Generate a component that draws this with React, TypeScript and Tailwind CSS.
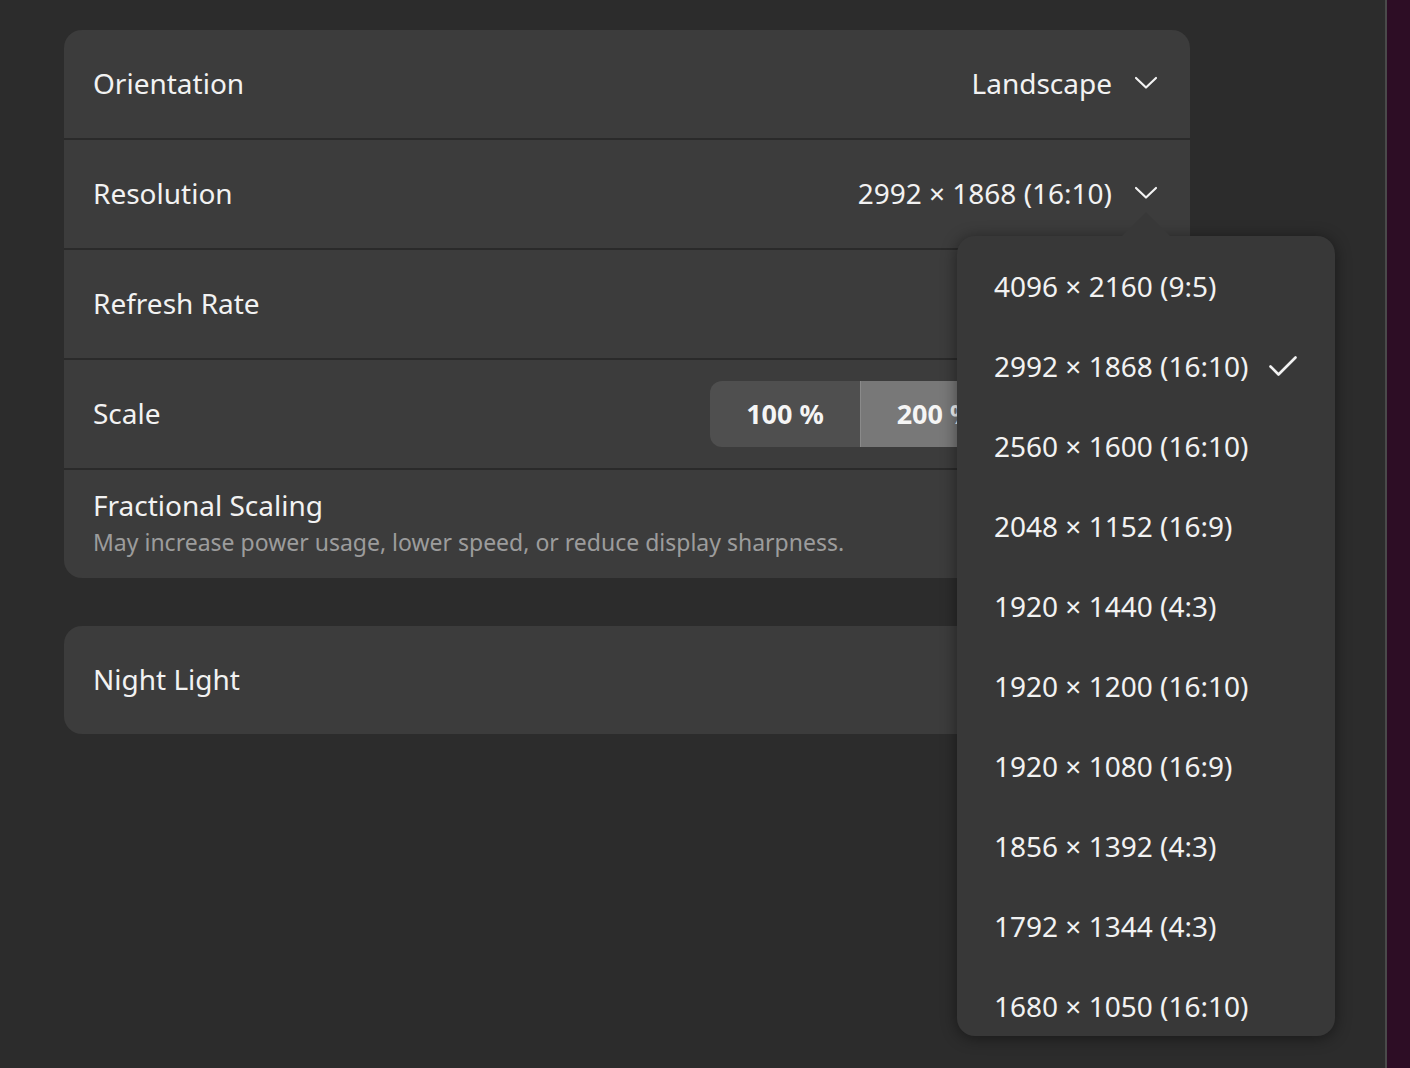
const font = { fontFamily: '"Noto Sans", "Open Sans", sans-serif' };

const resolutions = [
  '4096 × 2160 (9:5)',
  '2992 × 1868 (16:10)',
  '2560 × 1600 (16:10)',
  '2048 × 1152 (16:9)',
  '1920 × 1440 (4:3)',
  '1920 × 1200 (16:10)',
  '1920 × 1080 (16:9)',
  '1856 × 1392 (4:3)',
  '1792 × 1344 (4:3)',
  '1680 × 1050 (16:10)',
];

function Chevron() {
  return (
    <svg width="24" height="14" viewBox="0 0 24 14" fill="none" className="text-[#f2f2f2]">
      <polyline points="2,2 12,11.5 22,2" stroke="currentColor" strokeWidth="2.2" strokeLinecap="round" strokeLinejoin="round" />
    </svg>
  );
}

function Tick() {
  return (
    <svg width="30" height="24" viewBox="0 0 30 24" fill="none" className="text-[#f2f2f2]">
      <polyline points="2.5,12.5 10.5,20.5 27.5,3.5" stroke="currentColor" strokeWidth="2.6" strokeLinecap="round" strokeLinejoin="round" />
    </svg>
  );
}

function Row({ label, children }: { label: string; children?: React.ReactNode }) {
  return (
    <div className="flex items-center justify-between h-[110px] pl-[29px] pr-[32px] pb-[2px] border-b-2 border-[#2a2a2a]">
      <span className="text-[28px] text-[#f2f2f2]">{label}</span>
      {children}
    </div>
  );
}

function Dropdown({ value }: { value: string }) {
  return (
    <div className="flex items-center gap-[22px] text-[28px] text-[#f2f2f2]">
      <span>{value}</span>
      <Chevron />
    </div>
  );
}

export default function App() {
  return (
    <div className="relative flex w-full h-[1068px] bg-[#2c2c2c] overflow-hidden" style={font}>
      <div className="flex-1 pl-[64px] pt-[30px] flex flex-col gap-[48px]">
        <div className="w-[1126px] rounded-[18px] bg-[#3c3c3c] flex flex-col overflow-hidden">
          <Row label="Orientation">
            <Dropdown value="Landscape" />
          </Row>
          <Row label="Resolution">
            <Dropdown value="2992 × 1868 (16:10)" />
          </Row>
          <Row label="Refresh Rate" />
          <Row label="Scale">
            <div className="flex h-[66px] mt-[2px] rounded-[12px] overflow-hidden">
              <div className="w-[150px] flex items-center justify-center bg-[#4f4f4f] text-[27px] font-bold text-[#f5f5f5]">100 %</div>
              <div className="w-px bg-[#8a8a8a]" />
              <div className="w-[149px] flex items-center justify-center bg-[#787878] text-[27px] font-bold text-[#f5f5f5]">200 %</div>
              <div className="w-px bg-[#5c5c5c]" />
              <div className="w-[147px] bg-[#4f4f4f]" />
            </div>
          </Row>
          <div className="flex flex-col justify-center h-[108px] pl-[29px]">
            <span className="text-[28px] leading-[37px] text-[#f2f2f2]">Fractional Scaling</span>
            <span className="text-[23px] leading-[37px] text-[#9c9c9c]">May increase power usage, lower speed, or reduce display sharpness.</span>
          </div>
        </div>
        <div className="w-[1126px] rounded-[18px] bg-[#3c3c3c] flex items-center h-[108px] pl-[29px] pb-[2px]">
          <span className="text-[28px] text-[#f2f2f2]">Night Light</span>
        </div>
      </div>
      <div className="w-[25px] h-full border-l-2 border-[#4a4a4a] bg-[#2d0d25]" />

      {/* Resolution popover */}
      <div className="absolute left-[957px] top-[212px] w-[378px]">
        <div className="absolute left-[165px] top-0 w-0 h-0 border-l-[24px] border-r-[24px] border-b-[24px] border-l-transparent border-r-transparent border-b-[#383838]" />
        <div className="mt-[24px] w-full h-[800px] rounded-[18px] bg-[#383838] shadow-[0_2px_16px_rgba(0,0,0,0.45)] overflow-hidden pt-[10px]">
          {resolutions.map((r, i) => (
            <div key={r} className="flex items-center justify-between h-[80px] pl-[37px] pr-[37px] text-[28px] text-[#f2f2f2]">
              <span>{r}</span>
              {i === 1 && <Tick />}
            </div>
          ))}
        </div>
      </div>
    </div>
  );
}
